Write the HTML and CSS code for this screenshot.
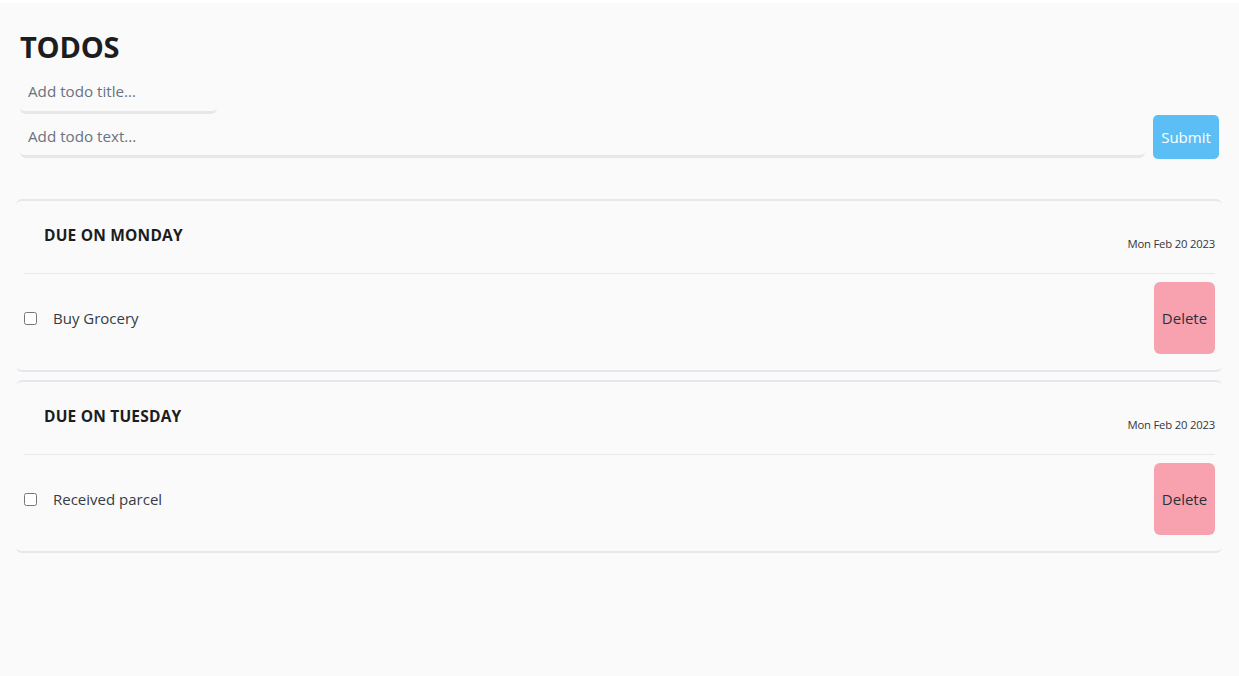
FILE: index.html
```html
<!DOCTYPE html>
<html lang="en">
<head>
<meta charset="utf-8">
<title>Todos</title>
<link rel="stylesheet" href="styles.css">
</head>
<body>
<main class="app">
  <h1 class="title">TODOS</h1>
  <form class="add-form">
    <input class="field field-title" type="text" placeholder="Add todo title...">
    <div class="form-row">
      <input class="field field-text" type="text" placeholder="Add todo text...">
      <button class="btn-submit" type="button">Submit</button>
    </div>
  </form>

  <section class="lists">
    <article class="card">
      <header class="card-head">
        <h2 class="card-title">DUE ON MONDAY</h2>
        <span class="card-date">Mon Feb 20 2023</span>
      </header>
      <div class="todo">
        <input class="check" type="checkbox">
        <span class="todo-text">Buy Grocery</span>
        <button class="btn-delete" type="button">Delete</button>
      </div>
    </article>
    <article class="card">
      <header class="card-head">
        <h2 class="card-title">DUE ON TUESDAY</h2>
        <span class="card-date">Mon Feb 20 2023</span>
      </header>
      <div class="todo">
        <input class="check" type="checkbox">
        <span class="todo-text">Received parcel</span>
        <button class="btn-delete" type="button">Delete</button>
      </div>
    </article>
  </section>
</main>
</body>
</html>
```

FILE: styles.css
```css
* { box-sizing: border-box; }

html, body {
  margin: 0;
  padding: 0;
  background: #ffffff;
  height: 100%;
}

body {
  font-family: "Open Sans", "Noto Sans", sans-serif;
  color: #1f2328;
  padding-top: 3px;
}

.app {
  background: #fafafa;
  min-height: 673px;
  padding: 24px 17px 20px 16px;
}

.title {
  margin: 0 4px;
  font-size: 29px;
  font-weight: 700;
  line-height: 40px;
  color: #1c1d21;
  letter-spacing: -0.2px;
}

.add-form {
  margin: 3px 3px 0 4px;
  display: flex;
  flex-direction: column;
  gap: 1px;
}

.field {
  font-family: inherit;
  font-size: 15.2px;
  color: #374151;
  background: #fafafa;
  border: none;
  border-bottom: 3px solid #e5e7eb;
  border-radius: 0 0 6px 6px;
  height: 44px;
  padding: 1px 8px 0 8px;
  outline: none;
}

.field::placeholder { color: #6b7280; }

.field-title { width: 197px; }

.form-row {
  display: flex;
  align-items: flex-start;
  gap: 8px;
}

.field-text { flex: 1; height: 43px; }

.btn-submit {
  font-family: inherit;
  font-size: 15px;
  color: #ffffff;
  background: #5bbff6;
  border: none;
  border-radius: 5px;
  height: 44px;
  width: 66px;
  padding: 0;
}

.lists {
  margin-top: 40px;
  display: flex;
  flex-direction: column;
  gap: 8px;
}

.card {
  border-top: 2px solid #e5e7eb;
  border-bottom: 2px solid #e5e7eb;
  border-radius: 6px;
  padding: 0 7px 0 8px;
  background: #fafafa;
}

.card-head {
  display: flex;
  justify-content: space-between;
  align-items: center;
  height: 73px;
  padding: 0 0 0 20px;
  border-bottom: 1px solid #e8e8ea;
}

.card-title {
  margin: 0 0 5px 0;
  font-size: 15.5px;
  font-weight: 700;
  color: #1c1d21;
  letter-spacing: 0.2px;
}

.card-date {
  font-size: 11.3px;
  color: #333641;
  margin-top: 12px;
  letter-spacing: -0.2px;
}

.todo {
  display: flex;
  align-items: center;
  padding: 8px 0 16px 0;
}

.check {
  margin: 0;
  width: 13px;
  height: 13px;
}

.todo-text {
  flex: 1;
  margin-left: 16px;
  font-size: 15px;
  color: #353a45;
}

.btn-delete {
  font-family: inherit;
  font-size: 15px;
  color: #2b2f38;
  background: #f8a2b0;
  border: none;
  border-radius: 6px;
  width: 61px;
  height: 72px;
  padding: 0;
}
```
